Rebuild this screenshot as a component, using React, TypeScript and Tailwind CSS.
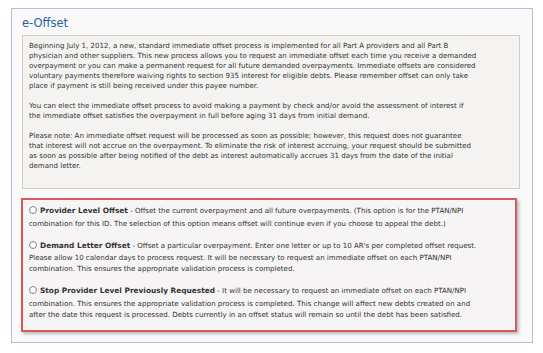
const grayLines1 = [
  "Beginning July 1, 2012, a new, standard immediate offset process is implemented for all Part A providers and all Part B",
  "physician and other suppliers. This new process allows you to request an immediate offset each time you receive a demanded",
  "overpayment or you can make a permanent request for all future demanded overpayments. Immediate offsets are considered",
  "voluntary payments therefore waiving rights to section 935 interest for eligible debts. Please remember offset can only take",
  "place if payment is still being received under this payee number.",
];
const grayLines2 = [
  "You can elect the immediate offset process to avoid making a payment by check and/or avoid the assessment of interest if",
  "the immediate offset satisfies the overpayment in full before aging 31 days from initial demand.",
];
const grayLines3 = [
  "Please note: An immediate offset request will be processed as soon as possible; however, this request does not guarantee",
  "that interest will not accrue on the overpayment. To eliminate the risk of interest accruing, your request should be submitted",
  "as soon as possible after being notified of the debt as interest automatically accrues 31 days from the date of the initial",
  "demand letter.",
];

function Lines({ lines }: { lines: string[] }) {
  return (
    <p>
      {lines.map((l, i) => (
        <span key={i} className="block whitespace-nowrap">
          {l}
        </span>
      ))}
    </p>
  );
}

function Radio() {
  return (
    <span className="inline-block w-[8px] h-[8px] rounded-full border border-[#858585] bg-white align-[-1px] mr-[3px]" />
  );
}

function Option({ label, first, rest }: { label: string; first: string; rest: string[] }) {
  return (
    <div>
      <span className="block whitespace-nowrap leading-[12.5px]">
        <Radio />
        <span className="font-bold text-[7.4px]">{label}</span>
        {first}
      </span>
      {rest.map((l, i) => (
        <span key={i} className="block whitespace-nowrap">
          {l}
        </span>
      ))}
    </div>
  );
}

export default function App() {
  return (
    <div className="w-[543px] h-[353px] bg-white pt-[8px] pl-[11px] font-['DejaVu_Sans',sans-serif]">
      <div className="w-[522px] h-[335px] border border-[#adc1d8] bg-[#f9f9f9] pl-[10px] pr-[11px] pt-[6px]">
        <h1 className="text-[11.5px] leading-[16px] text-[#2c62a3] font-normal">e-Offset</h1>
        <div className="mt-[4px] w-[498px] h-[154px] border border-[#d3cdc1] bg-[#f4f3f1] pl-[6px] pt-[5px] text-[7.05px] leading-[10px] text-[#333333] flex flex-col gap-[10px]">
          <Lines lines={grayLines1} />
          <Lines lines={grayLines2} />
          <Lines lines={grayLines3} />
        </div>
        <div className="mt-[9px] ml-[-1px] w-[496px] h-[134px] border-2 border-[#d65a57] bg-[#f6f4f4] shadow-[2px_2px_3px_rgba(0,0,0,0.25)] pl-[6px] pt-[5px] text-[7.05px] leading-[11px] text-[#333333] flex flex-col gap-[11px]">
          <Option
            label="Provider Level Offset"
            first=" - Offset the current overpayment and all future overpayments. (This option is for the PTAN/NPI"
            rest={[
              "combination for this ID. The selection of this option means offset will continue even if you choose to appeal the debt.)",
            ]}
          />
          <Option
            label="Demand Letter Offset"
            first=" - Offset a particular overpayment. Enter one letter or up to 10 AR's per completed offset request."
            rest={[
              "Please allow 10 calendar days to process request. It will be necessary to request an immediate offset on each PTAN/NPI",
              "combination. This ensures the appropriate validation process is completed.",
            ]}
          />
          <Option
            label="Stop Provider Level Previously Requested"
            first=" - It will be necessary to request an immediate offset on each PTAN/NPI"
            rest={[
              "combination. This ensures the appropriate validation process is completed. This change will affect new debts created on and",
              "after the date this request is processed. Debts currently in an offset status will remain so until the debt has been satisfied.",
            ]}
          />
        </div>
      </div>
    </div>
  );
}
